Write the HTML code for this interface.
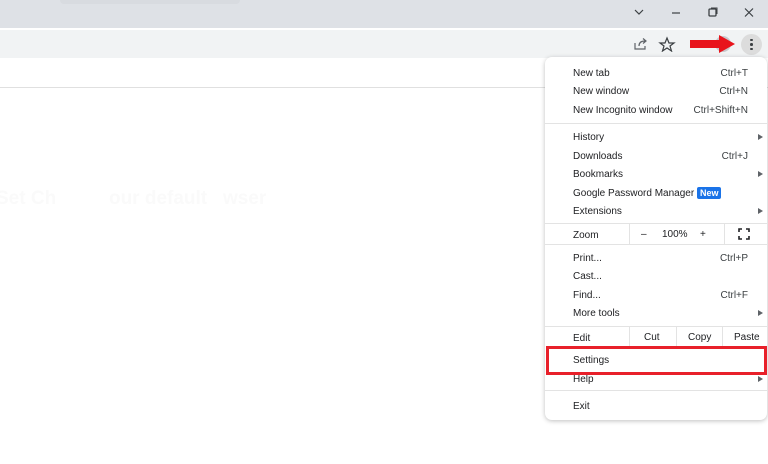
<!DOCTYPE html>
<html><head><style>
body{margin:0;width:768px;height:464px;overflow:hidden;background:#fff;font-family:"Liberation Sans",Arial,sans-serif;position:relative}
.a{position:absolute}
.m .t,.m .r{margin-top:2px}
.t{position:absolute;font-size:10px;line-height:12px;color:#202124;white-space:nowrap}
.r{position:absolute;font-size:10px;line-height:12px;color:#3c4043;white-space:nowrap;text-align:right;right:19px}
.ar{position:absolute;right:4px;width:0;height:0;border-left:5px solid #5f6368;border-top:3.5px solid transparent;border-bottom:3.5px solid transparent;margin-top:2px}
.sep{position:absolute;left:0;right:0;height:1px;background:#e3e3e3}
</style></head><body>
<div class="a" style="left:0;top:0;width:768px;height:28px;background:#dee1e6"></div>
<div class="a" style="left:60px;top:0;width:180px;height:4px;background:#d8dbe0;border-radius:0 0 8px 8px"></div>
<div class="a" style="left:0;top:30px;width:768px;height:28px;background:#f1f3f4"></div>
<div class="a" style="left:0;top:87px;width:768px;height:1px;background:#e0e0e0"></div>
<svg class="a" style="left:630px;top:4px" width="130" height="18" viewBox="0 0 130 18">
<path d="M5 6 L9 10 L13 6" fill="none" stroke="#3c4043" stroke-width="1.2"/>
<path d="M42 9 H50" stroke="#3c4043" stroke-width="1.2"/>
<rect x="79" y="5" width="7" height="7" fill="none" stroke="#3c4043" stroke-width="1.3" rx="1"/>
<path d="M81 4 H87 V10" fill="none" stroke="#3c4043" stroke-width="1"/>
<path d="M115 4.5 L123 12.5 M123 4.5 L115 12.5" stroke="#3c4043" stroke-width="1.2"/>
</svg>
<svg class="a" style="left:632px;top:36px" width="46" height="16" viewBox="0 0 46 16">
<path d="M3 7 V13 H13 V10 M7 10 C7 6 10 5 13 5 M11 2.5 L14 5 L11 7.5" fill="none" stroke="#5f6368" stroke-width="1.2"/>
<path d="M35 2 L37 7 L42 7 L38 10 L39.5 15 L35 12 L30.5 15 L32 10 L28 7 L33 7 Z" fill="none" stroke="#3c4043" stroke-width="1.2"/>
</svg>
<div class="a" style="left:715px;top:36px;width:16px;height:16px;border-radius:50%;background:#c8c8cc"></div>
<svg class="a" style="left:689px;top:34px" width="48" height="20" viewBox="0 0 48 20">
<path d="M1 6 H30 V1 L46 10 L30 19 V14 H1 Z" fill="#e8141c"/>
</svg>
<div class="a" style="left:741px;top:34px;width:21px;height:21px;border-radius:50%;background:#dcdcdc"></div>
<div class="a" style="left:750px;top:38.5px;width:2.5px;height:2.5px;border-radius:50%;background:#3c4043"></div>
<div class="a" style="left:750px;top:43px;width:2.5px;height:2.5px;border-radius:50%;background:#3c4043"></div>
<div class="a" style="left:750px;top:47.5px;width:2.5px;height:2.5px;border-radius:50%;background:#3c4043"></div>
<div class="a" style="left:-4px;top:188px;font-size:19px;color:#fafafa;font-weight:bold">Set Ch&nbsp;&nbsp;&nbsp;&nbsp;&nbsp;&nbsp;&nbsp;&nbsp;&nbsp;&nbsp;our default&nbsp;&nbsp;&nbsp;wser</div>
<div class="a m" style="left:545px;top:57px;width:222px;height:363px;background:#fff;border-radius:7px;box-shadow:0 1px 5px rgba(0,0,0,.25)">
<div class="t" style="left:28px;top:9px">New tab</div><div class="r" style="top:9px">Ctrl+T</div>
<div class="t" style="left:28px;top:27px">New window</div><div class="r" style="top:27px">Ctrl+N</div>
<div class="t" style="left:28px;top:46px">New Incognito window</div><div class="r" style="top:46px">Ctrl+Shift+N</div>
<div class="sep" style="top:66px"></div>
<div class="t" style="left:28px;top:73px">History</div><div class="ar" style="top:75px"></div>
<div class="t" style="left:28px;top:92px">Downloads</div><div class="r" style="top:92px">Ctrl+J</div>
<div class="t" style="left:28px;top:110px">Bookmarks</div><div class="ar" style="top:112px"></div>
<div class="t" style="left:28px;top:128px">Google Password Manager <span style="background:#1a73e8;color:#fff;font-weight:bold;font-size:9px;padding:1px 3px;border-radius:2px;margin-left:0">New</span></div>
<div class="t" style="left:28px;top:147px">Extensions</div><div class="ar" style="top:149px"></div>
<div class="sep" style="top:166px"></div>
<div class="t" style="left:28px;top:171px">Zoom</div>
<div class="a" style="left:84px;top:166px;width:1px;height:21px;background:#e3e3e3"></div>
<div class="t" style="left:96px;top:170px">–</div>
<div class="t" style="left:117px;top:170px">100%</div>
<div class="t" style="left:155px;top:170px">+</div>
<div class="a" style="left:179px;top:166px;width:1px;height:21px;background:#e3e3e3"></div>
<svg class="a" style="left:193px;top:171px" width="12" height="12" viewBox="0 0 12 12"><path d="M1 4 V1 H4 M8 1 H11 V4 M11 8 V11 H8 M4 11 H1 V8" fill="none" stroke="#202124" stroke-width="1.6"/></svg>
<div class="sep" style="top:187px"></div>
<div class="t" style="left:28px;top:194px">Print...</div><div class="r" style="top:194px">Ctrl+P</div>
<div class="t" style="left:28px;top:212px">Cast...</div>
<div class="t" style="left:28px;top:231px">Find...</div><div class="r" style="top:231px">Ctrl+F</div>
<div class="t" style="left:28px;top:249px">More tools</div><div class="ar" style="top:251px"></div>
<div class="sep" style="top:269px"></div>
<div class="t" style="left:28px;top:274px">Edit</div>
<div class="a" style="left:84px;top:269px;width:1px;height:21px;background:#e3e3e3"></div>
<div class="t" style="left:99px;top:273px">Cut</div>
<div class="a" style="left:131px;top:269px;width:1px;height:21px;background:#e3e3e3"></div>
<div class="t" style="left:143px;top:273px">Copy</div>
<div class="a" style="left:177px;top:269px;width:1px;height:21px;background:#e3e3e3"></div>
<div class="t" style="left:189px;top:273px">Paste</div>
<div class="t" style="left:28px;top:296px">Settings</div>
<div class="t" style="left:28px;top:315px">Help</div><div class="ar" style="top:317px"></div>
<div class="sep" style="top:333px"></div>
<div class="t" style="left:28px;top:342px">Exit</div>
</div>
<div class="a" style="left:546px;top:346px;width:215px;height:23px;border:3px solid #e8202a"></div>
</body></html>
